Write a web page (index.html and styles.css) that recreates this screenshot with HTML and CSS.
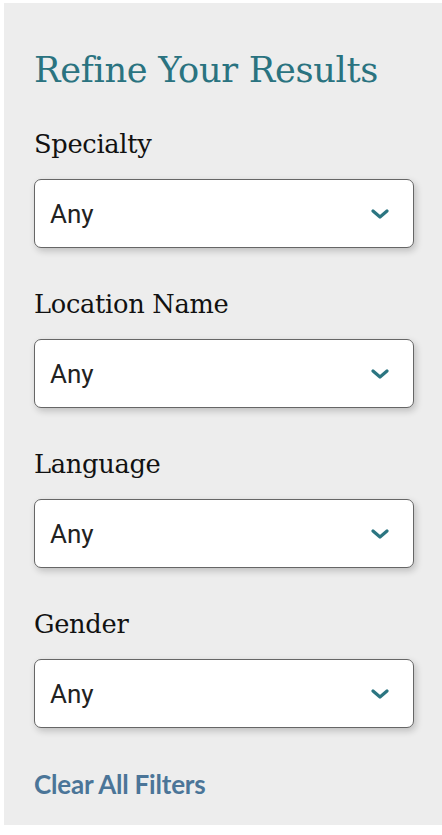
FILE: index.html
```html
<!DOCTYPE html>
<html>
<head>
<meta charset="utf-8">
<link rel="stylesheet" href="styles.css">
</head>
<body>
<aside class="panel">
  <h2 class="title">Refine Your Results</h2>
  <div class="field">
    <div class="label">Specialty</div>
    <div class="select"><span>Any</span><svg class="chev" viewBox="0 0 18 10" width="18" height="10"><path d="M2 2 L9 8 L16 2" fill="none" stroke="#2b7581" stroke-width="3.2" stroke-linecap="round" stroke-linejoin="round"/></svg></div>
  </div>
  <div class="field">
    <div class="label">Location Name</div>
    <div class="select"><span>Any</span><svg class="chev" viewBox="0 0 18 10" width="18" height="10"><path d="M2 2 L9 8 L16 2" fill="none" stroke="#2b7581" stroke-width="3.2" stroke-linecap="round" stroke-linejoin="round"/></svg></div>
  </div>
  <div class="field">
    <div class="label">Language</div>
    <div class="select"><span>Any</span><svg class="chev" viewBox="0 0 18 10" width="18" height="10"><path d="M2 2 L9 8 L16 2" fill="none" stroke="#2b7581" stroke-width="3.2" stroke-linecap="round" stroke-linejoin="round"/></svg></div>
  </div>
  <div class="field">
    <div class="label">Gender</div>
    <div class="select"><span>Any</span><svg class="chev" viewBox="0 0 18 10" width="18" height="10"><path d="M2 2 L9 8 L16 2" fill="none" stroke="#2b7581" stroke-width="3.2" stroke-linecap="round" stroke-linejoin="round"/></svg></div>
  </div>
  <a class="clear" href="#">Clear All Filters</a>
</aside>
</body>
</html>
```
FILE: styles.css
```css
html, body {
  margin: 0;
  padding: 0;
  background: #ffffff;
}
.panel {
  margin: 3px 0 0 4px;
  height: 822px;
  box-sizing: border-box;
  background: #ededed;
  padding: 47px 28px 0 30px;
  display: flex;
  flex-direction: column;
}
.title {
  margin: 0;
  font-family: "DejaVu Serif", serif;
  font-weight: normal;
  font-size: 35.2px;
  line-height: 40px;
  height: 40px;
  color: #2a7380;
  letter-spacing: -0.3px;
  white-space: nowrap;
}
.field {
  display: flex;
  flex-direction: column;
}
.title + .field {
  margin-top: 38px;
}
.label {
  font-family: "DejaVu Serif", serif;
  font-size: 25.7px;
  line-height: 32px;
  color: #111;
  letter-spacing: -0.3px;
  height: 32px;
  margin-bottom: 19px;
  white-space: nowrap;
}
.select {
  width: 380px;
  height: 69px;
  flex: 0 0 69px;
  box-sizing: border-box;
  background: #fff;
  border: 1px solid #666;
  border-radius: 7px;
  box-shadow: 2px 3px 7px rgba(0,0,0,0.2);
  display: flex;
  align-items: center;
  justify-content: space-between;
  padding: 0 24px 0 15px;
  margin-bottom: 40px;
}
.select span {
  font-family: Roboto, "Liberation Sans", sans-serif;
  font-size: 26px;
  color: #222;
}
.chev {
  display: block;
}
.clear {
  font-family: Lato, "Liberation Sans", sans-serif;
  font-weight: bold;
  font-size: 26px;
  line-height: 32px;
  color: #4b7598;
  text-decoration: none;
  letter-spacing: -0.2px;
  align-self: flex-start;
}
```
